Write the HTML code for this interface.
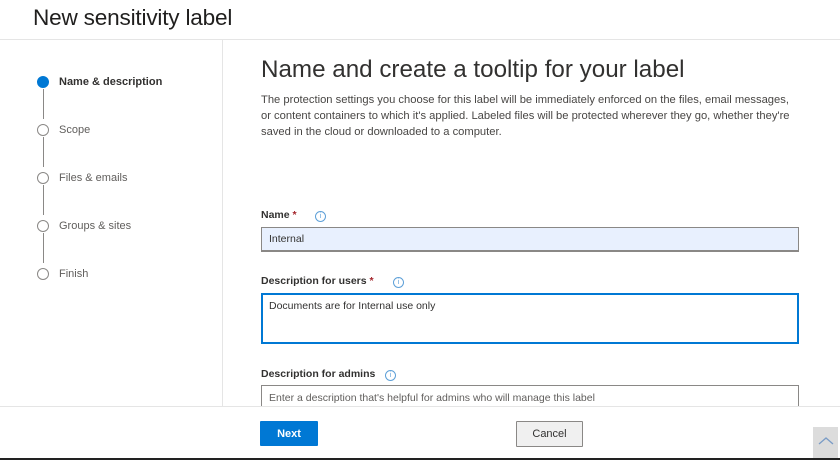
<!DOCTYPE html>
<html><head><meta charset="utf-8"><style>
*{margin:0;padding:0;box-sizing:border-box}
body{width:840px;height:460px;overflow:hidden;background:#fff;font-family:"Liberation Sans",sans-serif;color:#323130;position:relative}
.a{position:absolute}
h1{position:absolute;left:33px;top:5px;font-size:22.6px;font-weight:normal;color:#201f1e;letter-spacing:-0.2px}
.hl{left:0;top:39px;width:840px;height:1px;background:#e5e5e5}
.vl{left:222px;top:40px;width:1px;height:366px;background:#e5e5e5}
.fl{left:0;top:406px;width:840px;height:1px;background:#e5e5e5}
.bl{left:0;top:458px;width:840px;height:2px;background:#222}
.dot{width:12px;height:12px;border-radius:50%;border:1.5px solid #8a8886;background:#fff;left:37px}
.dot.on{background:#0078d4;border-color:#0078d4}
.ln{left:42.5px;width:1.5px;background:#8a8886}
.st{left:59px;font-size:11px;color:#605e5c}
.st.b{font-weight:bold;color:#323130}
.h2{left:261px;top:56px;font-size:24.2px;color:#323130}
.p{left:261px;top:92px;width:570px;font-size:11.2px;line-height:16px;color:#484644;white-space:nowrap}
.lab{left:261px;font-size:10.5px;font-weight:bold;color:#323130}
.req{color:#a4262c}
.info{width:11px;height:11px;border:1px solid #5ea0d8;border-radius:50%;font-size:7px;color:#5ea0d8;text-align:center;line-height:9px;font-weight:normal}
.inp{left:261px;width:538px;border:1px solid #8a8886;font-size:10.5px;padding:0 7px;color:#323130}
.btn{font-size:11px;text-align:center;line-height:26px;border-radius:1px}
</style></head><body>
<h1>New sensitivity label</h1>
<div class="a hl"></div><div class="a vl"></div><div class="a fl"></div><div class="a bl"></div>

<div class="a dot on" style="top:76px"></div>
<div class="a ln" style="top:89px;height:30px"></div>
<div class="a dot" style="top:124px"></div>
<div class="a ln" style="top:137px;height:30px"></div>
<div class="a dot" style="top:172px"></div>
<div class="a ln" style="top:185px;height:30px"></div>
<div class="a dot" style="top:220px"></div>
<div class="a ln" style="top:233px;height:30px"></div>
<div class="a dot" style="top:268px"></div>
<div class="a st b" style="top:76px">Name &amp; description</div>
<div class="a st" style="top:124px">Scope</div>
<div class="a st" style="top:172px">Files &amp; emails</div>
<div class="a st" style="top:220px">Groups &amp; sites</div>
<div class="a st" style="top:268px">Finish</div>

<div class="a h2">Name and create a tooltip for your label</div>
<div class="a p">The protection settings you choose for this label will be immediately enforced on the files, email messages,<br>or content containers to which it's applied. Labeled files will be protected wherever they go, whether they're<br>saved in the cloud or downloaded to a computer.</div>

<div class="a lab" style="top:209px">Name <span class="req">*</span></div>
<div class="a info" style="left:315px;top:211px">i</div>
<div class="a inp" style="top:227px;height:25px;line-height:23px;background:#e8f0fe;border-width:1px 1px 2px 1px">Internal</div>

<div class="a lab" style="top:275px">Description for users <span class="req">*</span></div>
<div class="a info" style="left:393px;top:277px">i</div>
<div class="a inp" style="top:293px;height:51px;border:2px solid #0078d4;padding:5px 6px;line-height:13px">Documents are for Internal use only</div>

<div class="a lab" style="top:368px">Description for admins</div>
<div class="a info" style="left:385px;top:370px">i</div>
<div class="a inp" style="top:385px;height:21px;line-height:24px;border-bottom:none;color:#605e5c">Enter a description that's helpful for admins who will manage this label</div>

<div class="a btn" style="left:260px;top:421px;width:58px;height:25px;background:#0078d4;color:#fff;font-weight:bold">Next</div>
<div class="a btn" style="left:516px;top:421px;width:67px;height:26px;background:#f0f0f0;border:1px solid #8a8886;color:#323130;line-height:24px">Cancel</div>

<div class="a" style="left:813px;top:427px;width:25px;height:31px;background:#dcdcdc"></div>
<svg class="a" style="left:817px;top:436px" width="18" height="10"><path d="M2 8 L9 2 L16 8" fill="none" stroke="#7a9cc6" stroke-width="1.3"/></svg>
</body></html>
